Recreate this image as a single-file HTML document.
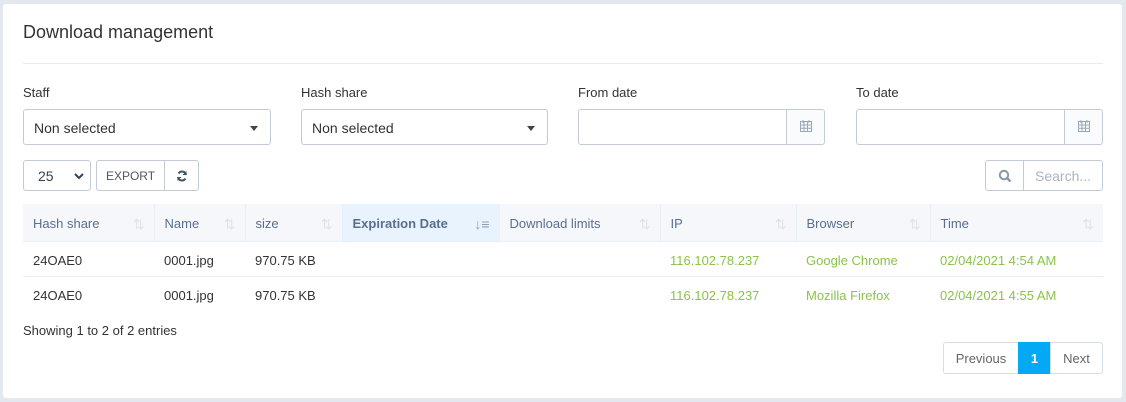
<!DOCTYPE html>
<html><head><meta charset="utf-8"><style>
*{box-sizing:border-box;margin:0;padding:0}
body{width:1126px;height:402px;background:#e3e7ee;font-family:"Liberation Sans",sans-serif;font-size:13px;color:#333;position:relative;overflow:hidden}
.card{position:absolute;left:3px;top:4px;width:1119px;height:394px;background:#fff;border-radius:3px}
.a{position:absolute}
h1{position:absolute;left:23px;top:22px;font-size:18px;font-weight:normal;color:#333}
.hr{position:absolute;left:23px;top:63px;width:1080px;height:1px;background:#e9ecef}
.lbl{top:85px;font-size:13px}
.sel{top:109px;height:36px;border:1px solid #c2cbd6;border-radius:3px;padding:10px 10px;font-size:14px}
.caret{position:absolute;right:12px;top:16px;border-left:4px solid transparent;border-right:4px solid transparent;border-top:5px solid #444}
.cal{position:absolute;right:0;top:0;width:38px;height:34px;border-left:1px solid #c2cbd6;background:#f9fbfd;border-radius:0 3px 3px 0}
.btn{top:160px;height:31px;border:1px solid #c2cbd6;border-radius:3px;font-size:12px;color:#555;display:flex;align-items:center;justify-content:center}
table{position:absolute;left:23px;top:204px;width:1080px;border-collapse:collapse}
th{height:37px;padding-top:2px;background:#f5f7fa;text-align:left;font-weight:normal;color:#5a6f8f;padding-left:10px;border-left:1px solid #e8eff8;position:relative}
th:first-child{border-left:none}
th.s{background:#e9f3fd;font-weight:bold}
th i{position:absolute;right:9px;top:12px;color:#dfe4ea;font-style:normal;font-size:14px}
td{height:35px;padding-left:10px;padding-top:3px;border-top:1px solid #e8eff8}
td.g{color:#8bc34a}
.pg{top:342px;height:32px;border:1px solid #d8dde3;font-size:13px;display:flex;align-items:center;justify-content:center;color:#666}
</style></head><body>
<div class="card"></div>
<h1>Download management</h1>
<div class="hr"></div>
<div class="a lbl" style="left:23px">Staff</div>
<div class="a lbl" style="left:301px">Hash share</div>
<div class="a lbl" style="left:578px">From date</div>
<div class="a lbl" style="left:856px">To date</div>
<div class="a sel" style="left:23px;width:248px">Non selected<span class="caret"></span></div>
<div class="a sel" style="left:301px;width:247px">Non selected<span class="caret"></span></div>
<div class="a sel" style="left:578px;width:247px"><span class="cal"><svg width="38" height="34"><g fill="none" stroke="#9aa8b8"><rect x="13.5" y="11.5" width="11" height="10"/><path d="M13.5 15h11M13.5 18.3h11M17 11.5v10M20.5 11.5v10M16 10v3M22 10v3"/></g></svg></span></div>
<div class="a sel" style="left:856px;width:247px"><span class="cal"><svg width="38" height="34"><g fill="none" stroke="#9aa8b8"><rect x="13.5" y="11.5" width="11" height="10"/><path d="M13.5 15h11M13.5 18.3h11M17 11.5v10M20.5 11.5v10M16 10v3M22 10v3"/></g></svg></span></div>
<div class="a btn" style="left:23px;width:68px;font-size:14px;color:#345;justify-content:flex-start;padding-left:14px">25<svg style="position:absolute;right:6px;top:12px" width="10" height="7"><path d="M1 1l4 4 4-4" fill="none" stroke="#345" stroke-width="2"/></svg></div>
<div class="a btn" style="left:96px;width:69px;border-radius:3px 0 0 3px">EXPORT</div>
<div class="a btn" style="left:164px;width:35px;border-radius:0 3px 3px 0"><svg width="12" height="12" viewBox="0 0 12 12"><path d="M10 5A4 4 0 0 0 2.6 3.5M2 7a4 4 0 0 0 7.4 1.5" fill="none" stroke="#456" stroke-width="2"/><path d="M10.5 1v4h-4zM1.5 11V7h4z" fill="#456"/></svg></div>
<div class="a btn" style="left:985px;width:39px;border-radius:3px 0 0 3px"><svg width="14" height="14"><circle cx="6" cy="6" r="4.2" fill="none" stroke="#8a97a8" stroke-width="2"/><path d="M9 9l3.5 3.5" stroke="#8a97a8" stroke-width="2.4"/></svg></div>
<div class="a btn" style="left:1023px;width:80px;border-radius:0 3px 3px 0;color:#aab4c0;font-size:14px;justify-content:flex-start;padding-left:11px">Search...</div>
<table>
<tr><th style="width:131px">Hash share<i>⇅</i></th><th style="width:91px">Name<i>⇅</i></th><th style="width:97px">size<i>⇅</i></th><th class="s" style="width:157px">Expiration Date<i style="color:#8aa0bb">↓≡</i></th><th style="width:161px">Download limits<i>⇅</i></th><th style="width:136px">IP<i>⇅</i></th><th style="width:134px">Browser<i>⇅</i></th><th>Time<i>⇅</i></th></tr>
<tr><td>24OAE0</td><td>0001.jpg</td><td>970.75 KB</td><td></td><td></td><td class="g">116.102.78.237</td><td class="g">Google Chrome</td><td class="g">02/04/2021 4:54 AM</td></tr>
<tr><td>24OAE0</td><td>0001.jpg</td><td>970.75 KB</td><td></td><td></td><td class="g">116.102.78.237</td><td class="g">Mozilla Firefox</td><td class="g">02/04/2021 4:55 AM</td></tr>
</table>
<div class="a" style="left:23px;top:323px">Showing 1 to 2 of 2 entries</div>
<div class="a pg" style="left:943px;width:76px;border-radius:3px 0 0 3px">Previous</div>
<div class="a pg" style="left:1018px;width:33px;background:#03a9f4;border-color:#03a9f4;color:#fff;font-weight:bold">1</div>
<div class="a pg" style="left:1050px;width:53px;border-radius:0 3px 3px 0">Next</div>
</body></html>
